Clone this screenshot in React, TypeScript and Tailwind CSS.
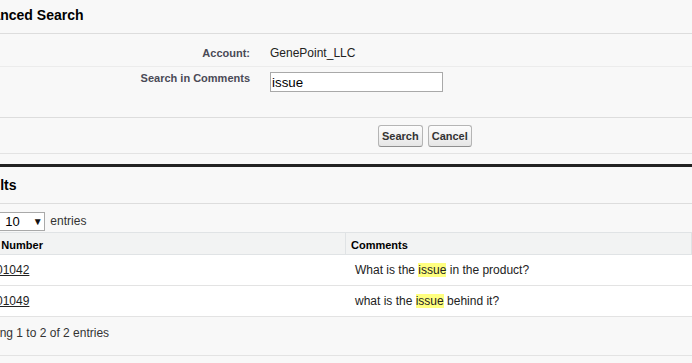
export default function App() {
  return (
    <div className="w-[692px] h-[363px] overflow-hidden bg-[#f8f8f8] font-['Liberation_Sans',Arial,sans-serif] text-[12px] leading-[14px] text-black">
      <div className="ml-[-34px] w-[726px]">
        {/* Advanced Search block */}
        <div className="h-[34px] border-b border-[#dddddd] pt-[7px] text-[14px] leading-[16px] font-bold">
          Advanced Search
        </div>
        <div className="flex h-[33px] border-b border-[#ececec]">
          <div className="w-[294px] pr-[10px] pt-[12px] text-right text-[11px] font-bold text-[#4a4a56]">
            Account:
          </div>
          <div className="pl-[10px] pt-[12px] text-[#222]">GenePoint_LLC</div>
        </div>
        <div className="flex h-[51px] border-b border-[#dddddd]">
          <div className="w-[294px] pr-[10px] pt-[4px] text-right text-[11px] font-bold text-[#4a4a56]">
            Search in Comments
          </div>
          <div className="pl-[10px] pt-[5px]">
            <input
              defaultValue="issue"
              className="h-[20px] w-[173px] border border-[#a9a9a9] bg-white px-[1px] text-[13.33px] text-black outline-none font-['Liberation_Sans',Arial,sans-serif]"
            />
          </div>
        </div>
        <div className="flex h-[36px] gap-[5px] border-b border-[#e3e3e3] pl-[412px] pt-[7px]">
          <button className="h-[22px] rounded-[3px] border border-[#b5b5b5] border-b-[#8f8f8f] bg-linear-to-b from-[#fdfdfd] to-[#e6e6e6] px-[3px] text-[11px] font-bold text-[#333]">
            Search
          </button>
          <button className="h-[22px] rounded-[3px] border border-[#b5b5b5] border-b-[#8f8f8f] bg-linear-to-b from-[#fdfdfd] to-[#e6e6e6] px-[3px] text-[11px] font-bold text-[#333]">
            Cancel
          </button>
        </div>

        {/* Results block */}
        <div className="mt-[10px] h-[40px] border-t-[3px] border-b border-t-[#222] border-b-[#dddddd] pt-[10px] text-[14px] leading-[16px] font-bold">
          Results
        </div>
        <div className="flex h-[28px] items-start pt-[8px] text-[#333]">
          <span className="leading-[19px]">Show&nbsp;</span>
          <div className="flex h-[19px] w-[46px] items-center border border-[#a9a9a9] bg-white pl-[5px] text-[13px] text-black">
            <span>10</span>
            <span className="ml-[13px] text-[10px] text-[#111]">▼</span>
          </div>
          <span className="ml-[5px] leading-[19px]">entries</span>
        </div>

        <div className="grid grid-cols-[380px_346px]">
          <div className="flex h-[23px] items-center border-y border-r border-[#e0e3e5] bg-[#f2f3f3] pl-[6px] pt-[2px] text-[11px] font-bold">
            Case Number
          </div>
          <div className="flex h-[23px] items-center border-y border-r border-[#e0e3e5] bg-[#f2f3f3] pl-[5px] pt-[2px] text-[11px] font-bold">
            Comments
          </div>

          <div className="flex h-[31px] items-center border-b border-[#e3e3e3] bg-white pl-[10px]">
            <a className="text-[#222] underline">00001042</a>
          </div>
          <div className="flex h-[31px] items-center border-b border-[#e3e3e3] bg-white pl-[9px] text-[#222]">
            <span>
              What is the <span className="bg-[#ffff80]">issue</span> in the product?
            </span>
          </div>

          <div className="flex h-[31px] items-center border-b border-[#e3e3e3] bg-white pl-[10px]">
            <a className="text-[#222] underline">00001049</a>
          </div>
          <div className="flex h-[31px] items-center border-b border-[#e3e3e3] bg-white pl-[9px] text-[#222]">
            <span>
              what is the <span className="bg-[#ffff80]">issue</span> behind it?
            </span>
          </div>
        </div>

        <div className="h-[39px] border-b border-[#e3e3e3] pl-[1px] pt-[9px] text-[#333]">
          Showing 1 to 2 of 2 entries
        </div>
      </div>
    </div>
  );
}
